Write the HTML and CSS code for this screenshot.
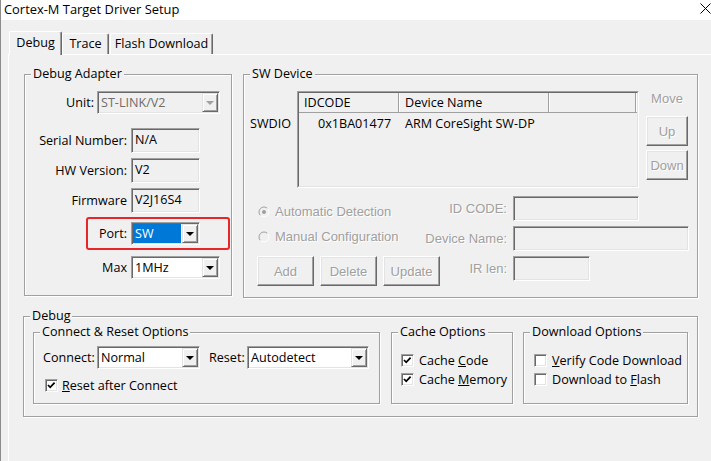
FILE: index.html
```html
<!DOCTYPE html>
<html>
<head>
<meta charset="utf-8">
<link rel="stylesheet" href="styles.css">
</head>
<body>
<div class="window">
  <div class="titlebar">
    <span class="title">Cortex-M Target Driver Setup</span>
    <svg class="close" width="11" height="11" viewBox="0 0 11 11"><path d="M0.5 0.5 L10.5 10.5 M10.5 0.5 L0.5 10.5" stroke="#000" stroke-width="1" fill="none"/></svg>
  </div>
  <div class="tabs">
    <div class="tab active t-debug">Debug</div>
    <div class="tab t-trace">Trace</div>
    <div class="tab t-flash">Flash Download</div>
  </div>
  <div class="panel">
    <div class="toprow">
      <div class="group adapter">
        <div class="legend">Debug Adapter</div>
        <div class="row unit-row">
          <span class="lbl">Unit:</span>
          <div class="combo disabled w123"><span class="val">ST-LINK/V2</span><span class="dd"></span></div>
        </div>
        <div class="row info-row r-serial">
          <span class="lbl">Serial Number:</span>
          <div class="tbox">N/A</div>
        </div>
        <div class="row info-row r-gap">
          <span class="lbl">HW Version:</span>
          <div class="tbox">V2</div>
        </div>
        <div class="row info-row r-gap">
          <span class="lbl">Firmware</span>
          <div class="tbox">V2J16S4</div>
        </div>
        <div class="port-box">
          <span class="lbl">Port:</span>
          <div class="combo w69"><span class="val sel">SW</span><span class="dd"></span></div>
        </div>
        <div class="row max-row">
          <span class="lbl">Max</span>
          <div class="combo w89"><span class="val">1MHz</span><span class="dd"></span></div>
        </div>
      </div>
      <div class="group swdev">
        <div class="legend">SW Device</div>
        <div class="sw-top">
          <span class="swdio">SWDIO</span>
          <div class="list">
            <div class="list-in">
              <div class="lhead">
                <span class="hc c1">IDCODE</span>
                <span class="hc c2">Device Name</span>
                <span class="hc c3"></span>
              </div>
              <div class="lrow">
                <span class="rc c1">0x1BA01477</span>
                <span class="rc c2">ARM CoreSight SW-DP</span>
              </div>
            </div>
          </div>
          <div class="move">
            <div class="move-lbl dis">Move</div>
            <div class="btn dis up">Up</div>
            <div class="btn dis down">Down</div>
          </div>
        </div>
        <div class="sw-bottom">
          <div class="sw-left">
            <div class="radio-row dis">
              <svg class="radio" width="12" height="12" viewBox="0 0 12 12"><circle cx="6" cy="6" r="5" fill="#f0f0f0"/><path d="M2.46 9.54 A5 5 0 0 1 9.54 2.46" stroke="#a0a0a0" fill="none"/><path d="M9.54 2.46 A5 5 0 0 1 2.46 9.54" stroke="#fff" fill="none"/><circle cx="6" cy="6" r="2" fill="#a0a0a0"/></svg>
              <span>Automatic Detection</span>
            </div>
            <div class="radio-row dis">
              <svg class="radio" width="12" height="12" viewBox="0 0 12 12"><circle cx="6" cy="6" r="5" fill="#f0f0f0"/><path d="M2.46 9.54 A5 5 0 0 1 9.54 2.46" stroke="#a0a0a0" fill="none"/><path d="M9.54 2.46 A5 5 0 0 1 2.46 9.54" stroke="#fff" fill="none"/></svg>
              <span>Manual Configuration</span>
            </div>
            <div class="btn-row">
              <div class="btn dis b57">Add</div>
              <div class="btn dis b57">Delete</div>
              <div class="btn dis b57">Update</div>
            </div>
          </div>
          <div class="sw-right">
            <div class="frow">
              <div class="flab dis"><span>ID CODE:</span></div>
              <div class="tbox w126"></div>
            </div>
            <div class="frow">
              <div class="flab dis"><span>Device Name:</span></div>
              <div class="tbox w176"></div>
            </div>
            <div class="frow">
              <div class="flab dis"><span>IR len:</span></div>
              <div class="tbox w77"></div>
            </div>
          </div>
        </div>
      </div>
    </div>
    <div class="group debug">
      <div class="legend">Debug</div>
      <div class="dbg-row">
        <div class="group connect">
          <div class="legend">Connect &amp; Reset Options</div>
          <div class="conn-row">
            <span class="clbl">Connect:</span>
            <div class="combo w103"><span class="val">Normal</span><span class="dd"></span></div>
            <span class="rlbl">Reset:</span>
            <div class="combo w122"><span class="val">Autodetect</span><span class="dd"></span></div>
          </div>
          <div class="chk-row first">
            <span class="cb"><svg width="11" height="11" viewBox="0 0 11 11"><path d="M2 5 L4.2 7.3 L8.6 2.6" stroke="#000" stroke-width="1.8" fill="none"/></svg></span>
            <span class="ctext"><u>R</u>eset after Connect</span>
          </div>
        </div>
        <div class="group cache">
          <div class="legend">Cache Options</div>
          <div class="opts">
            <div class="chk-row">
              <span class="cb"><svg width="11" height="11" viewBox="0 0 11 11"><path d="M2 5 L4.2 7.3 L8.6 2.6" stroke="#000" stroke-width="1.8" fill="none"/></svg></span>
              <span class="ctext">Cache <u>C</u>ode</span>
            </div>
            <div class="chk-row">
              <span class="cb"><svg width="11" height="11" viewBox="0 0 11 11"><path d="M2 5 L4.2 7.3 L8.6 2.6" stroke="#000" stroke-width="1.8" fill="none"/></svg></span>
              <span class="ctext">Cache <u>M</u>emory</span>
            </div>
          </div>
        </div>
        <div class="group download">
          <div class="legend">Download Options</div>
          <div class="opts">
            <div class="chk-row">
              <span class="cb"></span>
              <span class="ctext"><u>V</u>erify Code Download</span>
            </div>
            <div class="chk-row">
              <span class="cb"></span>
              <span class="ctext">Download to <u>F</u>lash</span>
            </div>
          </div>
        </div>
      </div>
    </div>
  </div>
</div>
</body>
</html>
```
FILE: styles.css
```css
* { box-sizing: border-box; }
body {
  margin: 0;
  background: #f0f0f0;
  font-family: "Open Sans", "Noto Sans CJK SC", sans-serif;
  font-size: 12.6px;
  color: #000;
}
.window {
  width: 711px;
  height: 461px;
  overflow: hidden;
  border-left: 1px solid #8c8c8c;
  background: #f0f0f0;
}
.titlebar {
  height: 20px;
  background: #fff;
  display: flex;
  align-items: center;
  justify-content: space-between;
  padding: 0 0 0 3px;
}
.title { line-height: 16px; margin-top: -3px; white-space: nowrap; font-size: 12.9px; }
.close { margin-top: -4px; }

/* tabs */
.tabs {
  height: 34px;
  display: flex;
  align-items: flex-end;
  padding-left: 8px;
}
.tab {
  height: 21px;
  border-top: 1px solid #fff;
  border-left: 1px solid #fff;
  border-right: 1px solid #696969;
  box-shadow: inset -1px 0 0 #a0a0a0;
  border-radius: 2px 2px 0 0;
  text-align: center;
  line-height: 19px;
  white-space: nowrap;
}
.tab.active {
  height: 24px;
  margin-bottom: -1px;
  position: relative;
  z-index: 1;
  background: #f0f0f0;
  line-height: 21px;
}
.t-debug { width: 53px; }
.t-trace { width: 47px; }
.t-flash { width: 103px; margin-left: 1px; }

.panel {
  margin-left: 7px;
  height: 407px;
  border-top: 1px solid #fff;
  border-left: 1px solid #fff;
  padding-top: 19px;
}

/* group boxes */
.group {
  border: 1px solid #a0a0a0;
  box-shadow: 1px 1px 0 #fff, inset 1px 1px 0 #fff;
  flex: none;
}
.legend {
  width: max-content;
  height: 16px;
  line-height: 16px;
  margin: -9px 0 0 6px;
  padding: 0 2px;
  background: #f0f0f0;
  white-space: nowrap;
}
.toprow { display: flex; align-items: flex-start; }

/* debug adapter */
.adapter { margin-left: 15px; width: 208px; height: 222px; }
.row { display: flex; align-items: center; }
.lbl { text-align: right; white-space: nowrap; flex: none; }
.unit-row { margin-top: 9px; height: 23px; }
.unit-row .lbl { width: 69px; margin-right: 3px; }
.info-row { height: 25px; }
.info-row .lbl, .max-row .lbl { width: 102px; margin-right: 4px; }
.r-serial { margin-top: 14px; }
.r-gap { margin-top: 5px; }
.port-box {
  margin: 4px 0 0 61px;
  width: 144px;
  height: 33px;
  border: 2px solid #e8262a;
  border-radius: 3px;
  display: flex;
  align-items: center;
}
.port-box .lbl { width: 39px; margin-right: 4px; }
.max-row { margin-top: 6px; height: 23px; }

/* combo */
.combo {
  display: flex;
  height: 23px;
  background: #fff;
  border: 1px solid;
  border-color: #a0a0a0 #fff #fff #a0a0a0;
  box-shadow: inset 1px 1px 0 #696969, inset -1px -1px 0 #e3e3e3;
  padding: 1px;
  flex: none;
}
.combo .val {
  flex: 1;
  padding-left: 2px;
  line-height: 19px;
  white-space: nowrap;
  overflow: hidden;
}
.combo .val.sel { background: #0078d7; color: #fff; margin-right: 1px; }
.combo .dd {
  width: 16px;
  flex: none;
  background: #f0f0f0;
  border: 1px solid;
  border-color: #e3e3e3 #696969 #696969 #e3e3e3;
  box-shadow: inset 1px 1px 0 #fff, inset -1px -1px 0 #a0a0a0;
  display: flex;
  align-items: center;
  justify-content: center;
}
.combo .dd::after {
  content: "";
  border-left: 4px solid transparent;
  border-right: 4px solid transparent;
  border-top: 4px solid #000;
  margin-top: 1px;
}
.combo.disabled { background: #f0f0f0; }
.combo.disabled .val { color: #6d6d6d; }
.combo.disabled .dd::after { border-top-color: #a0a0a0; }
.w69 { width: 69px; }
.w89 { width: 89px; }
.w103 { width: 103px; }
.w122 { width: 122px; }
.w123 { width: 123px; }

/* text boxes */
.tbox {
  width: 69px;
  height: 25px;
  flex: none;
  background: #f0f0f0;
  border: 1px solid;
  border-color: #a0a0a0 #fff #fff #a0a0a0;
  box-shadow: inset 1px 1px 0 #696969, inset -1px -1px 0 #e3e3e3;
  padding: 0 3px;
  line-height: 22px;
  white-space: nowrap;
}
.w126 { width: 126px; }
.w176 { width: 176px; }
.w77 { width: 77px; }

/* disabled look */
.dis {
  font-family: "Liberation Sans", Arial, sans-serif;
  font-size: 13px;
  color: #a0a0a0;
  text-shadow: 1px 1px 0 #fff;
}

/* buttons */
.btn {
  display: flex;
  align-items: center;
  justify-content: center;
  background: #f0f0f0;
  border: 1px solid;
  border-color: #fff #696969 #696969 #fff;
  box-shadow: inset -1px -1px 0 #a0a0a0, inset 1px 1px 0 #e3e3e3;
}

/* SW device */
.swdev { margin-left: 11px; width: 455px; height: 224px; }
.sw-top {
  display: flex;
  align-items: flex-start;
  margin-top: 9px;
  padding-left: 6px;
}
.swdio { width: 47px; margin-top: 25px; line-height: 16px; flex: none; }
.list {
  width: 342px;
  height: 97px;
  flex: none;
  border: 1px solid;
  border-color: #a0a0a0 #fff #fff #a0a0a0;
}
.list-in {
  height: 100%;
  border: 1px solid;
  border-color: #696969 #e3e3e3 #e3e3e3 #696969;
  background: #f0f0f0;
}
.lhead {
  display: flex;
  height: 20px;
  border-bottom: 1px solid #a0a0a0;
}
.hc {
  line-height: 19px;
  border-right: 1px solid #a0a0a0;
  box-shadow: 1px 0 0 #fff;
  white-space: nowrap;
}
.c1 { width: 100px; padding-left: 5px; }
.c2 { width: 150px; padding-left: 6px; }
.c3 { width: 87px; }
.lrow { display: flex; height: 21px; line-height: 21px; }
.rc { white-space: nowrap; }
.lrow .c1 { padding-left: 19px; }
.lrow .c2 { width: 200px; }
.move { margin-left: 7px; width: 42px; flex: none; }
.move-lbl { line-height: 16px; text-align: center; }
.move .btn { height: 30px; }
.move .up { margin-top: 9px; }
.move .down { margin-top: 4px; }

.sw-bottom { display: flex; align-items: flex-start; margin-top: 8px; }
.sw-left { margin-left: 13px; width: 186px; padding-top: 3px; flex: none; }
.radio-row {
  display: flex;
  align-items: center;
  height: 25px;
  padding-left: 1px;
  white-space: nowrap;
}
.radio { margin-right: 5px; flex: none; }
.btn-row { display: flex; gap: 6px; margin-top: 7px; }
.b57 { width: 57px; height: 30px; }
.sw-right { flex: none; }
.frow { display: flex; align-items: center; height: 25px; }
.frow + .frow { margin-top: 5px; }
.flab {
  width: 64px;
  margin-right: 6px;
  display: flex;
  justify-content: flex-end;
  white-space: nowrap;
  flex: none;
}

/* Debug group */
.debug { margin: 18px 0 0 14px; width: 675px; height: 101px; }
.dbg-row { display: flex; align-items: flex-start; margin-top: 8px; }
.connect { margin-left: 9px; width: 347px; height: 72px; }
.cache { margin-left: 11px; width: 122px; height: 72px; }
.download { margin-left: 10px; width: 165px; height: 72px; }
.conn-row {
  display: flex;
  align-items: center;
  height: 23px;
  margin-top: 6px;
  padding-left: 9px;
}
.clbl { width: 54px; flex: none; white-space: nowrap; }
.rlbl { width: 38px; margin-left: 9px; flex: none; white-space: nowrap; }
.chk-row {
  display: flex;
  align-items: center;
  height: 19px;
  white-space: nowrap;
}
.chk-row.first { margin-top: 7px; padding-left: 11px; }
.cb {
  width: 13px;
  height: 13px;
  flex: none;
  background: #fff;
  border: 1px solid;
  border-color: #a0a0a0 #fff #fff #a0a0a0;
  box-shadow: inset 1px 1px 0 #696969, inset -1px -1px 0 #e3e3e3;
  display: flex;
  align-items: center;
  justify-content: center;
}
.ctext { margin-left: 5px; }
.chk-row.first .ctext { margin-left: 4px; }
.opts { margin-top: 11px; padding-left: 9px; }
.cache .opts { width: 119px; overflow: hidden; }
.download .opts { padding-left: 10px; width: 158px; overflow: hidden; }
```
